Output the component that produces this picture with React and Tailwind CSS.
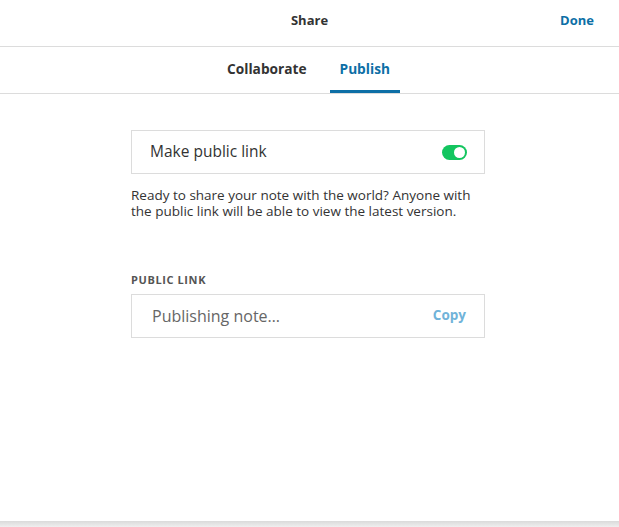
import React, { useState } from 'react';

const font = { fontFamily: '"Open Sans", "Noto Sans", sans-serif' };

export default function App() {
  const [isPublic, setIsPublic] = useState(true);

  return (
    <div className="flex h-[527px] w-full flex-col bg-white text-[#333]" style={font}>
      {/* header */}
      <div className="relative flex h-[47px] shrink-0 items-center justify-center border-b border-[#dcdcdc] pb-[5px]">
        <span className="text-[13px] font-bold text-[#333]">Share</span>
        <button className="absolute right-[25px] top-[11px] text-[13px] font-bold text-[#0d6fa6]">Done</button>
      </div>

      {/* tabs */}
      <div className="flex h-[47px] shrink-0 items-stretch justify-center gap-[13px] border-b border-[#dcdcdc] pr-[2px]">
        <button className="flex items-center px-[10px] pb-[1px] text-[13.7px] font-bold text-[#333]">Collaborate</button>
        <button className="flex items-center border-b-[3px] border-[#0d6fa6] px-[10px] pt-[2px] text-[13.7px] font-bold text-[#0d6fa6]">
          Publish
        </button>
      </div>

      {/* body */}
      <div className="flex flex-1 justify-center pr-[3px] pt-[36px]">
        <div className="w-[354px]">
          <div className="flex h-[44px] items-center justify-between border border-[#dcdcdc] pl-[18px] pr-[17px]">
            <span className="text-[15.5px] text-[#333]">Make public link</span>
            <button
              onClick={() => setIsPublic(!isPublic)}
              className={`flex h-[15px] w-[25px] items-center rounded-full px-[2px] ${isPublic ? 'justify-end bg-[#13c55f]' : 'justify-start bg-[#ccc]'}`}
            >
              <span className="block h-[11px] w-[11px] rounded-full bg-white" />
            </button>
          </div>

          <p className="mt-[13px] text-[13.5px] leading-[16px] text-[#333]">
            Ready to share your note with the world? Anyone with the public link will be able to view the latest version.
          </p>

          <div className="mt-[53px] text-[11px] font-bold uppercase tracking-[0.6px] text-[#555]">Public link</div>
          <div className="mt-[5px] flex h-[44px] items-center justify-between border border-[#dcdcdc] pl-[20px] pr-[18px]">
            <span className="text-[16px] text-[#666]">Publishing note…</span>
            <button className="text-[13.5px] font-bold text-[#70b3d9]">Copy</button>
          </div>
        </div>
      </div>

      <div className="h-[6px] shrink-0 bg-gradient-to-b from-[#dadada] to-[#efefef]" />
    </div>
  );
}
